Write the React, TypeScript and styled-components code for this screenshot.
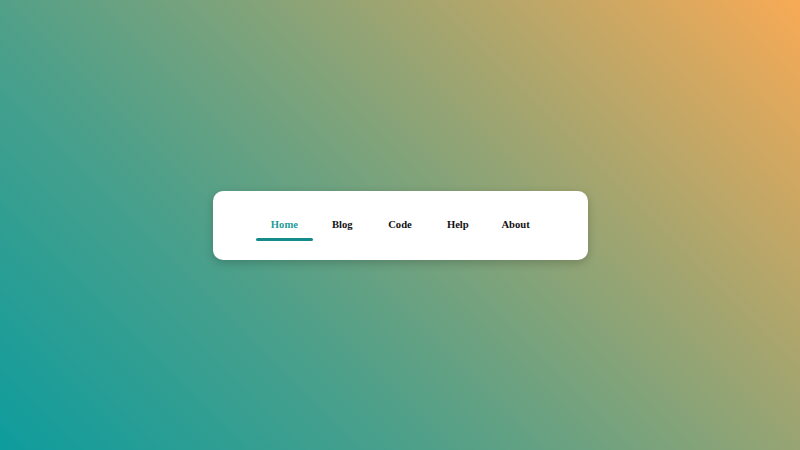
import React from 'react';
import styled, { createGlobalStyle } from 'styled-components';

const GlobalStyle = createGlobalStyle`
  html, body {
    margin: 0;
    padding: 0;
    height: 100%;
  }
  #root {
    height: 100%;
  }
`;

const Page = styled.main`
  width: 100%;
  height: 100vh;
  display: flex;
  align-items: center;
  justify-content: center;
  background: linear-gradient(45deg, #0e9c9d 0%, 56%, #f8aa55 100%);
  font-family: "Liberation Serif", "Times New Roman", serif;
`;

const Card = styled.nav`
  width: 375px;
  height: 69px;
  box-sizing: border-box;
  padding: 0 43px;
  display: flex;
  align-items: center;
  justify-content: center;
  background: #fff;
  border-radius: 10px;
  box-shadow: 0 3px 10px rgba(0, 0, 0, 0.2);
`;

const Item = styled.a<{ active?: boolean }>`
  position: relative;
  display: block;
  width: 58px;
  padding: 8px 0;
  text-align: center;
  font-size: 10.6px;
  font-weight: 700;
  line-height: 16px;
  color: ${({ active }) => (active ? '#1f9b98' : '#111')};
  text-decoration: none;
  cursor: pointer;

  &::after {
    content: '';
    position: absolute;
    left: 0;
    right: 0;
    bottom: 0;
    height: 3px;
    border-radius: 2px;
    background: #158c8b;
    opacity: ${({ active }) => (active ? 1 : 0)};
  }
`;

const links = ['Home', 'Blog', 'Code', 'Help', 'About'];

export default function App() {
  return (
    <>
      <GlobalStyle />
      <Page>
        <Card>
          {links.map((label, i) => (
            <Item key={label} active={i === 0}>
              {label}
            </Item>
          ))}
        </Card>
      </Page>
    </>
  );
}
